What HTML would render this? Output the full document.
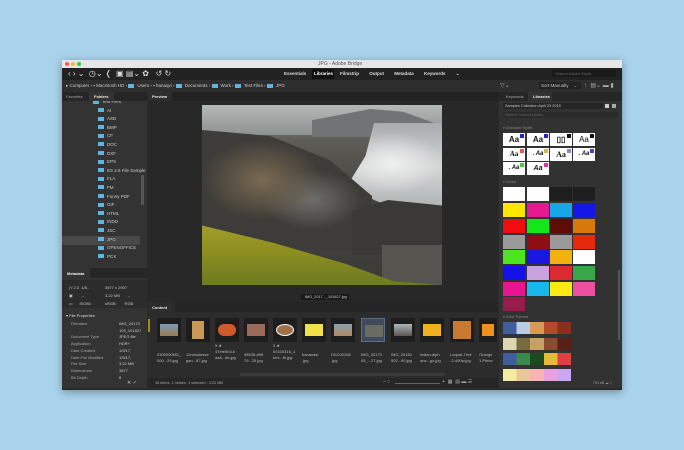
<!DOCTYPE html><html><head><meta charset="utf-8"><style>
*{margin:0;padding:0;box-sizing:border-box}
body{width:684px;height:450px;background:#a9d3eb;position:relative;overflow:hidden;font-family:"Liberation Sans",sans-serif;font-size:4.5px;color:#c8c8c8}
.a{position:absolute}
.win{left:62px;top:60px;width:560px;height:330px;background:#2a2a2a;box-shadow:0 2px 8px rgba(0,0,0,.35)}
.t{position:absolute;white-space:nowrap}
.fold{display:inline-block;width:6px;height:4px;background:#5fb4e0;margin-right:3px;vertical-align:-0.5px}
.sw{position:absolute;width:22px;height:14px}
.cs{position:absolute;width:22px;height:13px;background:#fff;color:#111;font-weight:bold;font-size:8px;text-align:center;line-height:13px}
.cs i{position:absolute;right:1px;top:1px;width:4px;height:4px}
.th{position:absolute;top:318px;width:24px;height:24px;background:#1d1d1d}
.th b{position:absolute;left:3px;top:6px;width:18px;height:12px}
.lb{position:absolute;top:349px;font-size:4px;color:#bbb;line-height:6px;width:27px}
</style></head><body>
<div class="a win"></div>
<div class="a" style="left:62px;top:60px;width:560px;height:8px;background:#e6e6e6"></div>
<div class="a" style="left:65px;top:62px;width:4px;height:4px;border-radius:50%;background:#fc5f57"></div>
<div class="a" style="left:71px;top:62px;width:4px;height:4px;border-radius:50%;background:#fdbc2e"></div>
<div class="a" style="left:77px;top:62px;width:4px;height:4px;border-radius:50%;background:#33c748"></div>
<div class="t" style="left:318px;top:61px;color:#555;font-size:5px">JPG - Adobe Bridge</div>
<div class="a" style="left:62px;top:68px;width:560px;height:12px;background:#222"></div>
<div class="t" style="left:68px;top:69px;font-size:8px;color:#ddd">‹ › ⌄ &nbsp;◷⌄ ❬ &nbsp;▣ ▤⌄ ✿ &nbsp; ↺ ↻</div>
<div class="t" style="left:284px;top:71px;font-size:4.5px;color:#ddd;font-weight:bold">Essentials</div>
<div class="a" style="left:312px;top:69px;width:22px;height:10px;background:#111"></div>
<div class="t" style="left:314px;top:71px;font-size:4.5px;color:#fff;font-weight:bold">Libraries</div>
<div class="t" style="left:340px;top:71px;font-size:4.5px;color:#ddd;font-weight:bold;word-spacing:9px">Filmstrip Output Metadata Keywords ⌄</div>
<div class="a" style="left:552px;top:70px;width:64px;height:7px;background:#1a1a1a"></div>
<div class="t" style="left:555px;top:71px;color:#666;font-size:4px">Search Adobe Stock</div>
<div class="a" style="left:62px;top:80px;width:560px;height:12px;background:#2e2e2e"></div>
<div class="t" style="left:66px;top:83px;color:#ccc">▸ Computer › ▪ Macintosh HD › <span class="fold"></span>Users › ▪ hanaqvi › <span class="fold"></span>Documents › <span class="fold"></span>Work › <span class="fold"></span>Test Files › <span class="fold"></span>JPG</div>
<div class="a" style="left:539px;top:82px;width:42px;height:7px;background:#222"></div>
<div class="t" style="left:541px;top:83px">Sort Manually &nbsp;&nbsp;&nbsp;⌄</div>
<div class="t" style="left:500px;top:82px;font-size:6px;color:#aaa">▽⌄</div>
<div class="t" style="left:584px;top:82px;font-size:6px;color:#aaa">↑ &nbsp;▤⌄ ▬ ▮</div>
<div class="a" style="left:62px;top:92px;width:85px;height:176px;background:#333"></div>
<div class="a" style="left:62px;top:92px;width:85px;height:9px;background:#262626"></div>
<div class="a" style="left:89px;top:92px;width:25px;height:9px;background:#333"></div>
<div class="t" style="left:66px;top:94px;color:#aaa;font-size:4px">Favorites</div>
<div class="t" style="left:94px;top:94px;color:#eee;font-size:4px;font-weight:bold">Folders</div>
<div class="a" style="left:62px;top:236px;width:78px;height:9px;background:#484848"></div>
<div class="a" style="left:141px;top:175px;width:3px;height:30px;background:#555"></div>
<div class="t" style="left:93px;top:98px;line-height:8.6px;color:#ccc;font-size:4.5px">
<span class="fold"></span>Test Files<br>&nbsp;&nbsp;&nbsp;&nbsp;<span class="fold"></span>AI<br>&nbsp;&nbsp;&nbsp;&nbsp;<span class="fold"></span>ASD<br>&nbsp;&nbsp;&nbsp;&nbsp;<span class="fold"></span>BMP<br>&nbsp;&nbsp;&nbsp;&nbsp;<span class="fold"></span>CF<br>&nbsp;&nbsp;&nbsp;&nbsp;<span class="fold"></span>DOC<br>&nbsp;&nbsp;&nbsp;&nbsp;<span class="fold"></span>DXF<br>&nbsp;&nbsp;&nbsp;&nbsp;<span class="fold"></span>EPS<br>&nbsp;&nbsp;&nbsp;&nbsp;<span class="fold"></span>ES 2.6 File Sample<br>&nbsp;&nbsp;&nbsp;&nbsp;<span class="fold"></span>FLA<br>&nbsp;&nbsp;&nbsp;&nbsp;<span class="fold"></span>FM<br>&nbsp;&nbsp;&nbsp;&nbsp;<span class="fold"></span>Funny PDF<br>&nbsp;&nbsp;&nbsp;&nbsp;<span class="fold"></span>GIF<br>&nbsp;&nbsp;&nbsp;&nbsp;<span class="fold"></span>HTML<br>&nbsp;&nbsp;&nbsp;&nbsp;<span class="fold"></span>INDD<br>&nbsp;&nbsp;&nbsp;&nbsp;<span class="fold"></span>JSC<br>&nbsp;&nbsp;&nbsp;&nbsp;<span class="fold"></span>JPG<br>&nbsp;&nbsp;&nbsp;&nbsp;<span class="fold"></span>OPENOFFICE<br>&nbsp;&nbsp;&nbsp;&nbsp;<span class="fold"></span>PCX</div>
<div class="a" style="left:62px;top:92px;width:85px;height:9px;background:#262626"></div>
<div class="a" style="left:89px;top:92px;width:25px;height:9px;background:#333"></div>
<div class="t" style="left:66px;top:94px;color:#aaa;font-size:4px">Favorites</div>
<div class="t" style="left:94px;top:94px;color:#eee;font-size:4px;font-weight:bold">Folders</div>
<div class="a" style="left:62px;top:268px;width:85px;height:120px;background:#333"></div>
<div class="a" style="left:62px;top:268px;width:85px;height:10px;background:#262626"></div>
<div class="a" style="left:62px;top:268px;width:28px;height:10px;background:#333"></div>
<div class="t" style="left:67px;top:271px;color:#eee;font-size:4px;font-weight:bold">Metadata</div>
<div class="a" style="left:62px;top:280px;width:85px;height:28px;background:#2c2c2c"></div>
<div class="t" style="left:69px;top:284px;line-height:8px;font-size:4px">ƒ/ 2.0 &nbsp;1/8..<br>▣ &nbsp;&nbsp;&nbsp;&nbsp;&nbsp;&nbsp;&nbsp;--<br>▭ &nbsp;&nbsp;&nbsp;&nbsp;&nbsp;ISO80</div>
<div class="t" style="left:105px;top:284px;line-height:8px;font-size:4px">3877 x 2907<br>3.22 MB &nbsp;&nbsp;&nbsp;&nbsp;&nbsp;&nbsp;--<br>sRGB &nbsp;&nbsp;&nbsp;&nbsp;&nbsp;&nbsp;&nbsp;RGB</div>
<div class="t" style="left:66px;top:313px;font-size:4px;color:#ddd">▾ File Properties</div>
<div class="t" style="left:71px;top:321px;line-height:6.7px;font-size:4px;color:#aaa">Filename<br><br>Document Type<br>Application<br>Date Created<br>Date File Modified<br>File Size<br>Dimensions<br>Bit Depth</div>
<div class="t" style="left:119px;top:321px;line-height:6.7px;font-size:4px;color:#ccc">IMG_20170<br>103_101827<br>JPEG file<br>HDR+<br>1/9/17,<br>1/9/17,<br>3.22 MB<br>3877<br>8</div>
<div class="t" style="left:127px;top:380px;font-size:5px">✕ ✓</div>
<div class="a" style="left:148px;top:92px;width:350px;height:210px;background:#282828"></div>
<div class="a" style="left:148px;top:92px;width:350px;height:9px;background:#222"></div>
<div class="a" style="left:148px;top:92px;width:24px;height:9px;background:#2e2e2e"></div>
<div class="t" style="left:152px;top:94px;color:#eee;font-size:4px;font-weight:bold">Preview</div>
<!-- photo -->
<div class="a" style="left:202px;top:105px;width:240px;height:180px;overflow:hidden;background:linear-gradient(180deg,#8a8c86 0,#5e5c56 20%,#46443f 50%,#3c3a36 100%)">
  <div class="a" style="left:0;top:0;width:240px;height:30px;background:linear-gradient(180deg,#b4b8b6,#8e9290)"></div>
  <div class="a" style="left:110px;top:4px;width:130px;height:28px;background:#6f7373;clip-path:polygon(0 40%,45% 0,70% 10%,100% 60%,100% 100%,0 100%)"></div>
  <div class="a" style="left:70px;top:18px;width:170px;height:110px;background:radial-gradient(ellipse 50px 30px at 120px 40px,#eef0f0,transparent),linear-gradient(180deg,#a8acae,#d4d6d6 40%,#9a9ea0);clip-path:polygon(60% 0,100% 0,100% 100%,85% 85%,60% 70%,45% 55%,55% 30%)"></div>
  <div class="a" style="left:0;top:25px;width:170px;height:120px;background:radial-gradient(ellipse 60px 40px at 60px 50px,#7a6a52,transparent),radial-gradient(ellipse 50px 30px at 110px 70px,#6e6e6a,transparent),#3e3c38;clip-path:polygon(0 0,40% 5%,75% 25%,100% 55%,100% 100%,0 100%)"></div>
  <div class="a" style="left:150px;top:95px;width:90px;height:55px;background:#3a3936;clip-path:polygon(0 20%,40% 0,100% 10%,100% 100%,0 100%)"></div>
  <div class="a" style="left:180px;top:140px;width:60px;height:40px;background:#56544e"></div>
  <div class="a" style="left:0;top:110px;width:240px;height:70px;background:linear-gradient(180deg,#a9a230,#8f9020 50%,#6c7a22);clip-path:polygon(0 15%,30% 40%,60% 70%,80% 95%,100% 100%,0 100%)"></div>
</div>
<div class="a" style="left:301px;top:294px;width:48px;height:6px;background:#1a1a1a"></div>
<div class="t" style="left:305px;top:295px;font-size:3.8px;color:#ccc">IMG_2017..._101827.jpg</div>
<div class="a" style="left:148px;top:302px;width:350px;height:86px;background:#2c2c2c"></div>
<div class="a" style="left:148px;top:302px;width:350px;height:10px;background:#252525"></div>
<div class="a" style="left:148px;top:302px;width:27px;height:10px;background:#2c2c2c"></div>
<div class="t" style="left:152px;top:305px;color:#eee;font-size:4px;font-weight:bold">Content</div>
<div class="a" style="left:148px;top:319px;width:2px;height:13px;background:#a38b22"></div>
<div class="th" style="left:157px"><b style="background:linear-gradient(#7a9ab8,#9a7a50)"></b></div>
<div class="th" style="left:186px"><b style="left:6px;width:12px;top:3px;height:18px;background:#c99a55"></b></div>
<div class="th" style="left:215px"><b style="background:#d25a2a;border-radius:6px"></b></div>
<div class="th" style="left:244px"><b style="background:#9a6a5a"></b></div>
<div class="th" style="left:273px"><b style="background:#a0704a;border-radius:50%;border:1px solid #fff"></b></div>
<div class="th" style="left:302px"><b style="background:#f2e04a"></b></div>
<div class="th" style="left:331px"><b style="background:linear-gradient(#8aa0b0,#b08a60)"></b></div>
<div class="th" style="left:361px;background:#3f4a5c;border:1px solid #5a6e8a"><b style="background:#6a6c62"></b></div>
<div class="th" style="left:391px"><b style="background:linear-gradient(#aab5bb,#5a5650)"></b></div>
<div class="th" style="left:420px"><b style="background:#f0b020"></b></div>
<div class="th" style="left:450px"><b style="top:3px;height:18px;background:#c87a30"></b></div>
<div class="th" style="left:479px;width:18px"><b style="background:#f09020;width:12px"></b></div>
<div class="lb" style="left:157px;top:346px">&nbsp;<br>0300000MG_<br>000...29.jpg</div>
<div class="lb" style="left:186px;top:346px">&nbsp;<br>10minutesve<br>gan...87.jpg</div>
<div class="lb" style="left:215px;top:343px">5 ★<br>47efe5b3-b<br>aa8...db.jpg</div>
<div class="lb" style="left:244px;top:346px">&nbsp;<br>98535-a9ff<br>79...29.jpg</div>
<div class="lb" style="left:273px;top:343px">3 ★<br>00100316_1<br>bmi...lb.jpg</div>
<div class="lb" style="left:302px;top:346px">&nbsp;<br>bananas!<br>.jpg</div>
<div class="lb" style="left:331px;top:346px">&nbsp;<br>DSC00108<br>.jpg</div>
<div class="lb" style="left:361px;top:346px">&nbsp;<br>IMG_20170<br>05_...27.jpg</div>
<div class="lb" style="left:391px;top:346px">&nbsp;<br>IMG_20160<br>902...90.jpg</div>
<div class="lb" style="left:420px;top:346px">&nbsp;<br>indian-alph<br>ons...go.jpg</div>
<div class="lb" style="left:450px;top:346px">&nbsp;<br>Loquat-Tree<br>-2-400w.jpg</div>
<div class="lb" style="left:479px;top:346px">&nbsp;<br>Orange<br>1-Piece</div>
<div class="a" style="left:240px;top:373px;width:205px;height:3px;background:#3a3a3a"></div>
<div class="a" style="left:148px;top:378px;width:350px;height:10px;background:#262626"></div>
<div class="t" style="left:155px;top:381px;font-size:3.8px;color:#aaa">16 items, 1 hidden, 1 selected - 3.22 MB</div>
<div class="t" style="left:383px;top:379px;font-size:5px;color:#aaa">– ○</div>
<div class="a" style="left:395px;top:383px;width:45px;height:1px;background:#666"></div>
<div class="t" style="left:442px;top:379px;font-size:5px;color:#aaa">+ &nbsp;▦ &nbsp;▤ ▬ ☰</div>
<div class="a" style="left:499px;top:92px;width:123px;height:296px;background:#323232"></div>
<div class="a" style="left:499px;top:92px;width:123px;height:9px;background:#262626"></div>
<div class="a" style="left:528px;top:92px;width:24px;height:9px;background:#323232"></div>
<div class="t" style="left:506px;top:94px;color:#aaa;font-size:4px">Keywords</div>
<div class="t" style="left:533px;top:94px;color:#eee;font-size:4px;font-weight:bold">Libraries</div>
<div class="a" style="left:503px;top:103px;width:100px;height:6px;background:#262626"></div>
<div class="t" style="left:505px;top:104px;font-size:3.8px">Samples Collection April 23 2015</div>
<div class="a" style="left:605px;top:104px;width:4px;height:4px;background:#ccc"></div>
<div class="a" style="left:612px;top:104px;width:4px;height:4px;background:#aaa"></div>
<div class="a" style="left:503px;top:112px;width:115px;height:6px;background:#2a2a2a"></div>
<div class="t" style="left:505px;top:113px;font-size:3.8px;color:#666">Search Current Library</div>
<div class="t" style="left:503px;top:126px;font-size:3.6px;color:#888">▾ Character Styles</div>
<div class="cs" style="left:503px;top:133px">Aa<i style="background:#22c"></i></div>
<div class="cs" style="left:527px;top:133px">Aa<i style="background:#22c"></i></div>
<div class="cs" style="left:550px;top:133px">▯▯<i style="background:#111"></i></div>
<div class="cs" style="left:573px;top:133px;font-weight:normal">Aa<i style="background:#111"></i></div>
<div class="cs" style="left:503px;top:148px;font-size:7px;font-family:'Liberation Serif'">Aa<i style="background:#e55"></i></div>
<div class="cs" style="left:527px;top:148px;font-size:6px;font-style:italic">. Aa<i style="background:#cb4"></i></div>
<div class="cs" style="left:550px;top:148px;font-family:'Liberation Serif'">Aa<i style="background:#88c"></i></div>
<div class="cs" style="left:573px;top:148px;font-size:6px;font-style:italic">. Aa<i style="background:#44d"></i></div>
<div class="cs" style="left:503px;top:162px;font-size:6px;font-style:italic">. Aa<i style="background:#4c4"></i></div>
<div class="cs" style="left:527px;top:162px;font-size:7px;font-style:italic">Aa<i style="background:#d3a"></i></div>
<div class="t" style="left:503px;top:180px;font-size:3.6px;color:#888">▾ Colors</div>
<div class="sw" style="left:503px;top:187px;background:#fff"></div><div class="sw" style="left:527px;top:187px;background:#fff"></div><div class="sw" style="left:550px;top:187px;background:#1e1e1e"></div><div class="sw" style="left:573px;top:187px;background:#1e1e1e"></div>
<div class="sw" style="left:503px;top:203px;background:#ffe600"></div><div class="sw" style="left:527px;top:203px;background:#e5198f"></div><div class="sw" style="left:550px;top:203px;background:#17a6e8"></div><div class="sw" style="left:573px;top:203px;background:#1616e8"></div>
<div class="sw" style="left:503px;top:219px;background:#f00d0d"></div><div class="sw" style="left:527px;top:219px;background:#15e61a"></div><div class="sw" style="left:550px;top:219px;background:#5e0c05"></div><div class="sw" style="left:573px;top:219px;background:#d6780a"></div>
<div class="sw" style="left:503px;top:235px;background:#9a9a9a"></div><div class="sw" style="left:527px;top:235px;background:#8e0f13"></div><div class="sw" style="left:550px;top:235px;background:#9a9a9a"></div><div class="sw" style="left:573px;top:235px;background:#e5290c"></div>
<div class="sw" style="left:503px;top:250px;background:#4de51d"></div><div class="sw" style="left:527px;top:250px;background:#1c17e0"></div><div class="sw" style="left:550px;top:250px;background:#f4b00f"></div><div class="sw" style="left:573px;top:250px;background:#fff"></div>
<div class="sw" style="left:503px;top:266px;background:#1510e8"></div><div class="sw" style="left:527px;top:266px;background:#c8a2e0"></div><div class="sw" style="left:550px;top:266px;background:#dc2a30"></div><div class="sw" style="left:573px;top:266px;background:#3aa64a"></div>
<div class="sw" style="left:503px;top:282px;background:#e9148f"></div><div class="sw" style="left:527px;top:282px;background:#18b7ea"></div><div class="sw" style="left:550px;top:282px;background:#fde914"></div><div class="sw" style="left:573px;top:282px;background:#ec4fa0"></div>
<div class="sw" style="left:503px;top:297px;background:#961d4a"></div>
<div class="t" style="left:503px;top:315px;font-size:3.6px;color:#888">▾ Color Themes</div>
<div class="a" style="left:503px;top:322px;width:68px;height:60px;background:
linear-gradient(90deg,#3f5ea0 0 20%,#bccbe0 20% 40%,#d89a55 40% 60%,#b04a2a 60% 80%,#8a2e20 80%) 0 0/100% 12px no-repeat,
linear-gradient(90deg,#ddd6b0 0 20%,#7a6a40 20% 40%,#c8a265 40% 60%,#8a4a30 60% 80%,#5a2018 80%) 0 16px/100% 12px no-repeat,
linear-gradient(90deg,#3f5ea0 0 20%,#3a8a4a 20% 40%,#1a4a1e 40% 60%,#e0bc3a 60% 80%,#dc4040 80%) 0 31px/100% 12px no-repeat,
linear-gradient(90deg,#f6eca0 0 20%,#e8c898 20% 40%,#f8b4b0 40% 60%,#e8a0e0 60% 80%,#c8a8f0 80%) 0 47px/100% 12px no-repeat"></div>
<div class="a" style="left:618px;top:270px;width:2px;height:70px;background:#555"></div>
<div class="t" style="left:593px;top:381px;font-size:3.6px;color:#999">703 kB ☁ ▯</div>
</body></html>
